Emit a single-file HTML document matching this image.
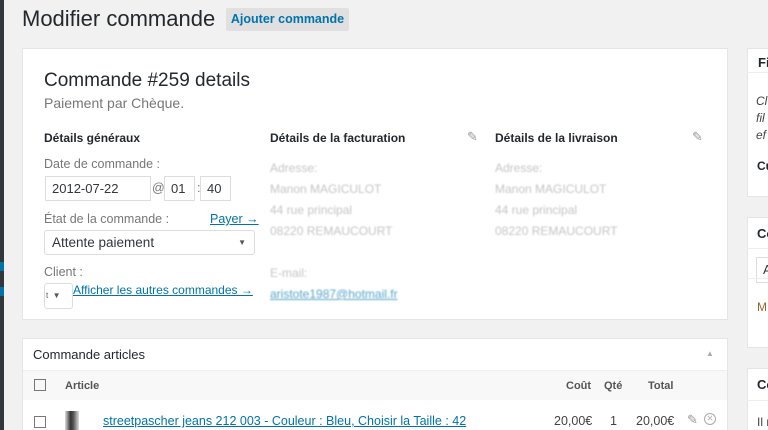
<!DOCTYPE html>
<html><head><meta charset="utf-8"><style>
*{box-sizing:border-box;margin:0;padding:0}
html,body{width:768px;height:430px;overflow:hidden}
body{background:#f1f1f1;font-family:"Liberation Sans",sans-serif;color:#444;position:relative;font-size:13px}
.abs{position:absolute;white-space:nowrap}
.sb{left:0;top:0;width:4px;height:430px;background:#32373c}
h1{left:22px;top:6px;font-size:22px;font-weight:400;color:#23282d}
.btn{left:226px;top:8px;width:123px;height:23px;background:#e0e0e0;color:#0073aa;font-size:12.5px;font-weight:bold;text-align:center;line-height:23px;border-radius:2px}
.box{background:#fff;border:1px solid #e5e5e5}
.lbl{color:#777;font-size:12.5px}
.h3{font-size:12px;font-weight:bold;color:#23282d}
.inp{border:1px solid #ddd;background:#fff;height:25px;font-size:13px;color:#32373c;line-height:23px;padding-left:6px}
a,.lnk{color:#0073aa;text-decoration:underline}
.blur{color:#c4c4c4;font-size:12px;filter:blur(0.9px);line-height:21px}
.pen{color:#999;font-size:13px}
</style></head><body>
<div class="abs sb"></div>
<div class="abs" style="left:0;top:262px;width:4px;height:9px;background:#0073aa"></div>
<div class="abs" style="left:0;top:287px;width:4px;height:9px;background:#0073aa"></div>
<h1 class="abs">Modifier commande</h1>
<div class="abs btn">Ajouter commande</div>

<div class="abs box" style="left:22px;top:48px;width:706px;height:272px"></div>
<div class="abs" style="left:44px;top:70px;font-size:19px;color:#23282d">Commande #259 details</div>
<div class="abs" style="left:44px;top:95px;font-size:14px;color:#777">Paiement par Chèque.</div>
<div class="abs h3" style="left:44px;top:131px">Détails généraux</div>
<div class="abs lbl" style="left:44px;top:157px">Date de commande :</div>
<div class="abs inp" style="left:45px;top:176px;width:106px">2012-07-22</div>
<div class="abs lbl" style="left:152px;top:181px">@</div>
<div class="abs inp" style="left:164px;top:176px;width:31px">01</div>
<div class="abs lbl" style="left:197px;top:181px">:</div>
<div class="abs inp" style="left:200px;top:176px;width:31px">40</div>
<div class="abs lbl" style="left:44px;top:212px">État de la commande :</div>
<div class="abs lnk" style="left:210px;top:212px;font-size:12.5px">Payer →</div>
<div class="abs inp" style="left:44px;top:230px;width:211px;height:25px;border-radius:3px;padding-left:7px;font-size:13.5px">Attente paiement<span style="position:absolute;right:8px;top:0;font-size:8px;color:#555">▼</span></div>
<div class="abs lbl" style="left:44px;top:265px">Client :</div>
<div class="abs inp" style="left:44px;top:283px;width:29px;height:26px;border-radius:3px;padding-left:1px;font-size:8px;color:#555">t &nbsp;▼</div>
<div class="abs lnk" style="left:73px;top:283px;font-size:12px">Afficher les autres commandes →</div>

<div class="abs h3" style="left:270px;top:131px">Détails de la facturation</div>
<div class="abs pen" style="left:467px;top:129px">✎</div>
<div class="abs blur" style="left:270px;top:158px">Adresse:<br>Manon MAGICULOT<br>44 rue principal<br>08220 REMAUCOURT<br><br>E-mail:<br><span style="color:#5aa5cc;text-decoration:underline">aristote1987@hotmail.fr</span></div>
<div class="abs h3" style="left:495px;top:131px">Détails de la livraison</div>
<div class="abs pen" style="left:692px;top:129px">✎</div>
<div class="abs blur" style="left:495px;top:158px">Adresse:<br>Manon MAGICULOT<br>44 rue principal<br>08220 REMAUCOURT</div>

<div class="abs box" style="left:22px;top:338px;width:706px;height:100px"></div>
<div class="abs" style="left:33px;top:347px;font-size:13px;color:#23282d">Commande articles</div>
<div class="abs" style="left:706px;top:349px;font-size:8px;color:#aaa">▲</div>
<div class="abs" style="left:23px;top:370px;width:704px;height:30px;background:#f8f8f8;border-top:1px solid #eee"></div>
<div class="abs" style="left:34px;top:379px;width:12px;height:12px;border:1px solid #777"></div>
<div class="abs" style="left:65px;top:380px;font-size:11px;font-weight:bold;color:#555">Article</div>
<div class="abs" style="left:566px;top:380px;font-size:11px;font-weight:bold;color:#555">Coût</div>
<div class="abs" style="left:604px;top:380px;font-size:11px;font-weight:bold;color:#555">Qté</div>
<div class="abs" style="left:648px;top:380px;font-size:11px;font-weight:bold;color:#555">Total</div>
<div class="abs" style="left:34px;top:416px;width:12px;height:12px;border:1px solid #777"></div>
<div class="abs" style="left:65px;top:411px;width:14px;height:19px;background:linear-gradient(90deg,#ddd,#333 40%,#555 60%,#ddd)"></div>
<div class="abs" style="left:103px;top:414px;font-size:12.5px;color:#0073aa;text-decoration:underline">streetpascher jeans 212 003 - Couleur : Bleu, Choisir la Taille : 42</div>
<div class="abs" style="left:554px;top:414px;font-size:12.5px">20,00€</div>
<div class="abs" style="left:610px;top:414px;font-size:12.5px">1</div>
<div class="abs" style="left:636px;top:414px;font-size:12.5px">20,00€</div>
<div class="abs pen" style="left:687px;top:412px">✎</div>
<div class="abs" style="left:704px;top:413px;width:12px;height:12px;border:1px solid #aaa;border-radius:50%;font-size:8px;color:#aaa;text-align:center;line-height:10px">✕</div>

<div class="abs box" style="left:747px;top:48px;width:30px;height:149px"></div>
<div class="abs" style="left:747px;top:72px;width:30px;height:1px;background:#eee"></div>
<div class="abs h3" style="left:758px;top:55px;font-size:13px">Fi</div>
<div class="abs" style="left:756px;top:93px;font-size:12px;font-style:italic;color:#444;line-height:17px">Cl<br>fil<br>ef</div>
<div class="abs h3" style="left:757px;top:159px">Cu</div>
<div class="abs box" style="left:747px;top:217px;width:30px;height:131px"></div>
<div class="abs" style="left:747px;top:248px;width:30px;height:1px;background:#eee"></div>
<div class="abs h3" style="left:757px;top:226px;font-size:13px">Co</div>
<div class="abs inp" style="left:756px;top:257px;width:20px;height:26px;padding-left:6px">A</div>
<div class="abs" style="left:747px;top:278px;width:30px;height:1px;background:#eee"></div>
<div class="abs" style="left:757px;top:300px;color:#a0622d;font-size:12px">M</div>
<div class="abs box" style="left:747px;top:368px;width:30px;height:70px"></div>
<div class="abs" style="left:747px;top:400px;width:30px;height:1px;background:#eee"></div>
<div class="abs h3" style="left:757px;top:377px;font-size:13px">Co</div>
<div class="abs" style="left:757px;top:415px;font-size:12px">Il r</div>
</body></html>
